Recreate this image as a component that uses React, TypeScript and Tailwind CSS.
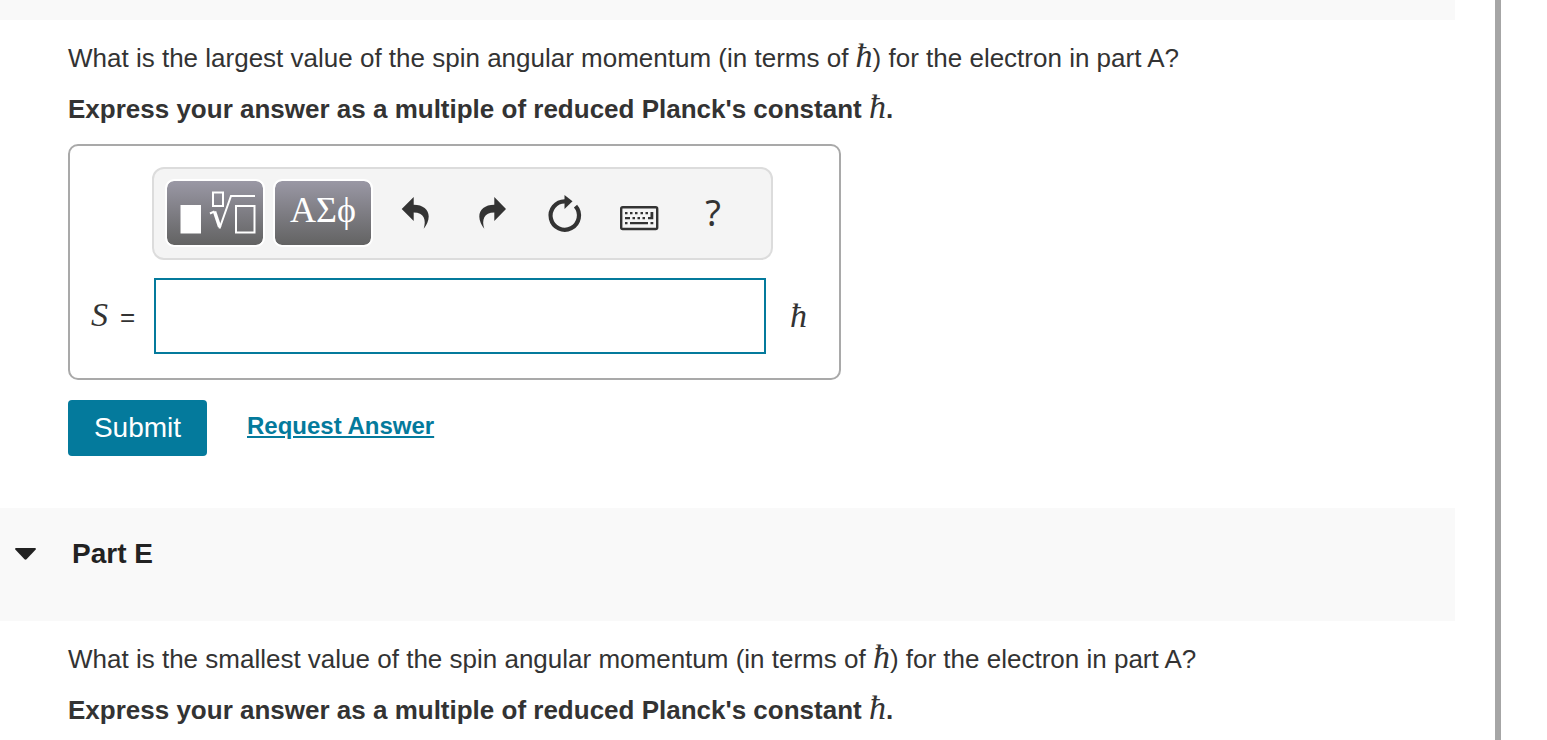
import type { ReactNode } from 'react'

function HBar({ className = '' }: { className?: string }) {
  return (
    <span className={`font-['Liberation_Serif',serif] text-[34px] leading-[0] font-normal italic ${className}`}>
      ħ
    </span>
  )
}

function Prompt({ extreme }: { extreme: string }) {
  return (
    <div className="flex flex-col gap-[19px]">
      <p className="leading-8">
        What is the {extreme} value of the spin angular momentum (in terms of <HBar />) for the electron in part A?
      </p>
      <p className="leading-8 font-bold">
        Express your answer as a multiple of reduced Planck's constant <HBar />.
      </p>
    </div>
  )
}

function PaletteButton({ label, children }: { label: string; children: ReactNode }) {
  return (
    <button
      type="button"
      aria-label={label}
      className="flex h-[68px] w-[100px] items-center justify-center rounded-[9px] border-2 border-white bg-linear-to-b from-[#9a98a5] to-[#636363] bg-clip-padding text-white"
    >
      {children}
    </button>
  )
}

function ToolButton({ label, children }: { label: string; children: ReactNode }) {
  return (
    <button type="button" aria-label={label} className="h-[68px] w-[74px] text-[#333]">
      <svg viewBox="0 0 74 68" className="size-full" fill="currentColor" aria-hidden="true">
        {children}
      </svg>
    </button>
  )
}

function Toolbar() {
  return (
    <div
      role="toolbar"
      aria-label="Equation editor"
      className="ml-[82px] flex h-[93px] w-[621px] items-start rounded-[12px] border-2 border-[#dcdcdc] bg-[#f4f4f4] pt-2.5 pl-[11px]"
    >
      <div className="mr-1.5 flex gap-2">
        <PaletteButton label="Templates">
          <svg viewBox="0 0 96 64" className="size-full" fill="none" stroke="currentColor" strokeWidth="2" aria-hidden="true">
            <path d="M13.5 24H34v28.5H13.5z" fill="currentColor" stroke="none" />
            <path d="M46 11.500h10v13.500H46zM69 25h18.500v26.500H69z" />
            <path d="M43 32.500l4.500-2.200" />
            <path d="M47.500 30.500l5.200 15.500" strokeWidth="3.500" />
            <path d="M52.500 47.500L64 15h24" />
          </svg>
        </PaletteButton>
        <PaletteButton label="Symbols">
          <span className="pb-1.5 font-['Liberation_Serif',serif] text-[36px] leading-none">ΑΣϕ</span>
        </PaletteButton>
      </div>
      <ToolButton label="Undo">
        <path d="M22.700 30L34.700 18v7.700C44 25.700 49.700 30.500 49.700 37.500C49.700 42 47.500 46.500 44.700 49.700C47.500 41 45 33.500 34.700 33.500V42z" />
      </ToolButton>
      <ToolButton label="Redo">
        <path d="M53 30L41.300 18v7.700C32 25.700 26.300 30.500 26.300 37.500C26.300 42 28.500 46.500 31.300 49.700C28.500 41 31 33.500 41.300 33.500V42z" />
      </ToolButton>
      <ToolButton label="Reset">
        <path d="M48.500 27.200A14.200 14.200 0 1 1 38 22.300" fill="none" stroke="currentColor" strokeWidth="4.200" />
        <path d="M37.500 16l8 6.300-8 7.700z" />
      </ToolButton>
      <ToolButton label="Keyboard shortcuts">
        <rect x="20.200" y="28.200" width="36" height="21.800" rx="1.500" fill="none" stroke="currentColor" strokeWidth="2.400" />
        <path d="M24 33h2.500v2.300H24zM29 33h2.500v2.300H29zM34 33h2.500v2.300H34zM39.500 33h2.500v2.300h-2.500zM44.500 33h2.500v2.300h-2.500zM49.500 33h2.800v7.300h-5.300V38h2.500z" />
        <path d="M24 38h5v2.300h-5zM31.500 38h2.500v2.300h-2.500zM36.500 38h2.500v2.300h-2.500zM41.500 38h2.500v2.300h-2.500z" />
        <path d="M24 43h2.500v2.300H24zM29 43h18v2.300H29zM49.500 43h2.800v2.300h-2.800z" />
      </ToolButton>
      <button type="button" aria-label="Help" className="h-[68px] w-[76px] font-['Noto_Sans',sans-serif] text-[36px] leading-none text-[#333]">
        ?
      </button>
    </div>
  )
}

function AnswerBox() {
  return (
    <div className="flex w-full max-w-[773px] flex-col gap-[18px] rounded-[10px] border-2 border-[#a9a9a9] pt-[21px] pb-6">
      <Toolbar />
      <div className="flex items-center">
        <label htmlFor="answer" className="flex w-[84px] shrink-0 items-baseline gap-3 pl-[21px]">
          <span className="font-['Liberation_Serif',serif] text-[34px] leading-10 italic">S</span>
          <span>=</span>
        </label>
        <input
          id="answer"
          type="text"
          className="h-[76px] w-[612px] min-w-0 border-2 border-[#047a9c] bg-white px-3 outline-none"
        />
        <HBar className="ml-6" />
      </div>
    </div>
  )
}

export default function App() {
  return (
    <div className="flex h-screen overflow-hidden bg-white font-['Liberation_Sans',sans-serif] text-[26px] text-[#333]">
      <main className="min-w-0 flex-1">
        <div className="h-5 bg-[#f9f9f9]" />
        <section className="px-[68px] pt-[22px] pb-[52px]">
          <Prompt extreme="largest" />
          <form className="mt-[19px]" onSubmit={(e) => e.preventDefault()}>
            <AnswerBox />
            <div className="mt-5 flex items-center gap-10">
              <button type="submit" className="h-14 w-[139px] rounded-[4px] bg-[#047a9c] text-[28px] leading-none text-white">
                Submit
              </button>
              <a href="#request" className="pb-1 text-[24px] leading-7 font-bold text-[#047a9c] underline decoration-2 underline-offset-2">
                Request Answer
              </a>
            </div>
          </form>
        </section>
        <section>
          <h2 className="h-[113px] bg-[#f9f9f9] text-[28px] font-bold text-[#222]">
            <button type="button" aria-expanded="true" className="flex h-[92px] w-full items-center gap-9 pl-[15px]">
              <svg viewBox="0 0 21 12" className="h-3 w-[21px]" fill="currentColor" aria-hidden="true">
                <path d="M1 0h19q1.500.5.500 1.800L11.500 11.300q-1 .9-2 0L.5 1.800Q-.5.500 1 0z" />
              </svg>
              Part E
            </button>
          </h2>
          <div className="px-[68px] pt-[22px]">
            <Prompt extreme="smallest" />
          </div>
        </section>
      </main>
      <div className="ml-10 w-[52px] shrink-0 border-l-6 border-[#a6a6a6]" />
    </div>
  )
}
